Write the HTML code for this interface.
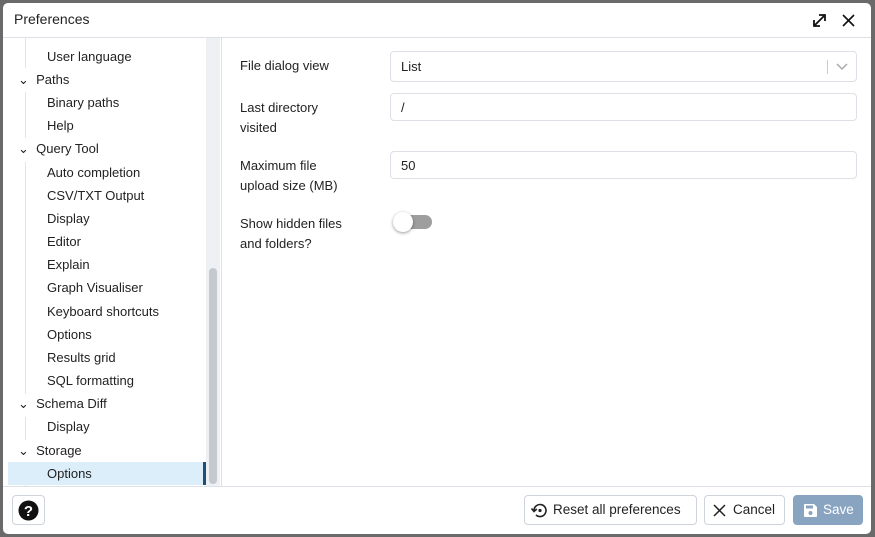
<html><head><style>
body{margin:0;width:875px;height:537px;background:#6a6a6a;font-family:"Liberation Sans",sans-serif;color:#222;overflow:hidden;position:relative}
.dlg{position:absolute;left:3px;top:3px;width:868px;height:531px;background:#fff;border-radius:5px;overflow:hidden}
.hdr{position:absolute;left:0;top:0;right:0;height:34px;border-bottom:1px solid #dde0e6}
.hdr .t{position:absolute;left:11px;top:8px;font-size:14px}
.tree{position:absolute;left:5px;top:35px;width:198px;height:448px;overflow:hidden}
.row{position:absolute;left:0;width:198px;height:23px;font-size:13px;line-height:23px}
.sb{position:absolute;left:203px;top:35px;width:14px;height:448px;background:#eef0f3}
.thumb{position:absolute;left:3px;top:230px;width:8px;height:216px;background:#c4c9d0;border-radius:4px}
.vline{position:absolute;left:17px;width:1px;background:#e4e4e4}
.main{position:absolute;left:218px;top:35px;width:650px;height:448px;border-left:1px solid #dde0e6}
.lbl{position:absolute;left:18px;font-size:13px;line-height:19.5px}
.inp{position:absolute;left:168px;width:467px;height:28px;border:1px solid #dde0e6;border-radius:4px;font-size:13px;line-height:28px;box-sizing:border-box;padding-left:10px}
.ftr{position:absolute;left:0;top:483px;right:0;height:48px;border-top:1px solid #dde0e6}
.btn{position:absolute;top:8px;height:30px;border:1px solid #cfd3da;border-radius:4px;box-sizing:border-box;font-size:13.5px;line-height:28px;color:#222;white-space:nowrap}
</style></head><body>
<div class="dlg">
<div class="hdr"><div class="t">Preferences</div>
<svg style="position:absolute;left:808px;top:9px" width="17" height="17" viewBox="0 0 17 17"><path d="M3 14L14 3M8 3h6v6M3 8v6h6" stroke="#111" stroke-width="1.8" fill="none"/></svg>
<svg style="position:absolute;left:839px;top:11px" width="13" height="13" viewBox="0 0 13 13"><path d="M1 1L12 12M12 1L1 12" stroke="#111" stroke-width="1.6"/></svg>
</div>
<div class="tree">
<div class="vline" style="top:0;height:30px"></div>
<div class="vline" style="top:54px;height:46px"></div>
<div class="vline" style="top:124px;height:232px"></div>
<div class="vline" style="top:379px;height:23px"></div>
<div class="vline" style="top:426px;height:23px"></div>
<div class="row" style="top:7px;padding-left:39px">User language</div>
<div class="row" style="top:30px;padding-left:10px">⌄&nbsp; Paths</div>
<div class="row" style="top:53px;padding-left:39px">Binary paths</div>
<div class="row" style="top:76px;padding-left:39px">Help</div>
<div class="row" style="top:99px;padding-left:10px">⌄&nbsp; Query Tool</div>
<div class="row" style="top:123px;padding-left:39px">Auto completion</div>
<div class="row" style="top:146px;padding-left:39px">CSV/TXT Output</div>
<div class="row" style="top:169px;padding-left:39px">Display</div>
<div class="row" style="top:192px;padding-left:39px">Editor</div>
<div class="row" style="top:215px;padding-left:39px">Explain</div>
<div class="row" style="top:238px;padding-left:39px">Graph Visualiser</div>
<div class="row" style="top:262px;padding-left:39px">Keyboard shortcuts</div>
<div class="row" style="top:285px;padding-left:39px">Options</div>
<div class="row" style="top:308px;padding-left:39px">Results grid</div>
<div class="row" style="top:331px;padding-left:39px">SQL formatting</div>
<div class="row" style="top:354px;padding-left:10px">⌄&nbsp; Schema Diff</div>
<div class="row" style="top:377px;padding-left:39px">Display</div>
<div class="row" style="top:401px;padding-left:10px">⌄&nbsp; Storage</div>
<div class="row" style="top:424px;padding-left:39px;background:#dbeefa;box-sizing:border-box;width:198px;border-right:3px solid #1f4e79">Options</div>
</div>
<div class="sb"><div class="thumb"></div></div>
<div class="main">
<div class="lbl" style="top:18px">File dialog view</div>
<div class="inp" style="top:13px;height:31px;line-height:30px">List<span style="position:absolute;right:28px;top:8px;width:1px;height:14px;background:#ccc"></span><svg style="position:absolute;right:8px;top:11px" width="12" height="8" viewBox="0 0 12 8"><path d="M1 1l5 5 5-5" stroke="#aaa" stroke-width="1.5" fill="none"/></svg></div>
<div class="lbl" style="top:60px">Last directory<br>visited</div>
<div class="inp" style="top:55px">/</div>
<div class="lbl" style="top:118px">Maximum file<br>upload size (MB)</div>
<div class="inp" style="top:113px">50</div>
<div class="lbl" style="top:176px">Show hidden files<br>and folders?</div>
<div style="position:absolute;left:176px;top:177px;width:34px;height:14px;border-radius:7px;background:#9e9e9e"></div>
<div style="position:absolute;left:171px;top:174px;width:20px;height:20px;border-radius:50%;background:#fff;box-shadow:0 1px 3px rgba(0,0,0,.4)"></div>
</div>
<div class="ftr">
<div class="btn" style="left:9px;width:33px;background:#fff"><svg style="position:absolute;left:5px;top:4px" width="21" height="21" viewBox="0 0 21 21"><circle cx="10.5" cy="10.5" r="10" fill="#111"/><text x="10.5" y="16" font-size="15" font-weight="bold" text-anchor="middle" fill="#fff" font-family="Liberation Sans">?</text></svg></div>
<div class="btn" style="left:521px;width:173px;padding-left:28px"><svg style="position:absolute;left:6px;top:6px" width="17" height="17" viewBox="0 0 17 17"><path d="M3 8.5A6 6 0 1 1 5 13" stroke="#222" stroke-width="1.6" fill="none"/><path d="M0.5 6.5L3 9.5 5.8 7" stroke="#222" stroke-width="1.6" fill="none"/><circle cx="9" cy="8.5" r="1.6" fill="#222"/></svg>Reset all preferences</div>
<div class="btn" style="left:701px;width:81px;padding-left:28px"><svg style="position:absolute;left:8px;top:8px" width="13" height="13" viewBox="0 0 13 13"><path d="M1 1L12 12M12 1L1 12" stroke="#222" stroke-width="1.5"/></svg>Cancel</div>
<div class="btn" style="left:790px;width:70px;background:#88a4c0;border-color:#88a4c0;color:#fff;padding-left:29px"><svg style="position:absolute;left:9px;top:7px" width="15" height="15" viewBox="0 0 15 15"><path d="M1 2a1 1 0 0 1 1-1h9l3 3v9a1 1 0 0 1-1 1H2a1 1 0 0 1-1-1z" fill="#fff"/><rect x="3" y="2.5" width="7" height="3" fill="#88a4c0"/><circle cx="7.5" cy="10" r="2" fill="#88a4c0"/></svg>Save</div>
</div>
</div>
</body></html>
